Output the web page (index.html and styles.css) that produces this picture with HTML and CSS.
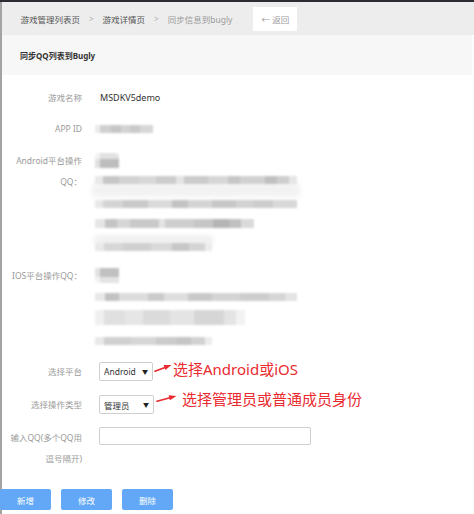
FILE: index.html
```html
<!DOCTYPE html>
<html lang="zh-CN">
<head>
<meta charset="utf-8">
<title>同步QQ列表到Bugly</title>
<link rel="stylesheet" href="styles.css">
</head>
<body>
<div class="topbar"></div>
<div class="page">
  <nav class="crumbs">
    <span class="crumb">游戏管理列表页</span>
    <span class="sep">&gt;</span>
    <span class="crumb">游戏详情页</span>
    <span class="sep">&gt;</span>
    <span class="crumb current">同步信息到bugly</span>
    <a class="back">← 返回</a>
  </nav>
  <div class="subhead"><h1 class="title">同步QQ列表到Bugly</h1></div>

  <div class="form">
    <div class="row">
      <div class="label">游戏名称</div>
      <div class="value text">MSDKV5demo</div>
    </div>
    <div class="row">
      <div class="label">APP ID</div>
      <div class="value"><div class="vline"><span class="blur b-appid"></span></div></div>
    </div>
    <div class="row">
      <div class="label">Android平台操作QQ：</div>
      <div class="value">
        <div class="vline"><span class="blur b-sq"></span></div>
        <div class="vline"><span class="blur b-a1"></span></div>
        <div class="vline"><span class="blur b-a2"></span></div>
        <div class="vline"><span class="blur b-a3"></span></div>
        <div class="vline"><span class="blur b-a4"></span></div>
      </div>
    </div>
    <div class="row">
      <div class="label">IOS平台操作QQ：</div>
      <div class="value">
        <div class="vline"><span class="blur b-sq b-sq2"></span></div>
        <div class="vline"><span class="blur b-i1"></span></div>
        <div class="vline"><span class="blur b-i2"></span></div>
        <div class="vline"><span class="blur b-i3"></span></div>
      </div>
    </div>
    <div class="row row-select">
      <div class="label">选择平台</div>
      <div class="value inline">
        <div class="select s1"><span>Android</span><span class="caret">▼</span></div>
        <svg class="arrow a1" width="18" height="21" viewBox="0 0 18 21">
          <line x1="1" y1="10.2" x2="11" y2="6.5" stroke="#ea2a2f" stroke-width="1.7" stroke-linecap="round"/>
          <polygon points="17.5,4 9.6,4 11.4,9" fill="#ea2a2f"/>
        </svg>
        <span class="note n1">选择Android或iOS</span>
      </div>
    </div>
    <div class="row row-select">
      <div class="label">选择操作类型</div>
      <div class="value inline">
        <div class="select s2"><span>管理员</span><span class="caret">▼</span></div>
        <svg class="arrow a2" width="22" height="21" viewBox="0 0 22 21">
          <line x1="1" y1="7.2" x2="14" y2="3.8" stroke="#ea2a2f" stroke-width="1.7" stroke-linecap="round"/>
          <polygon points="20.5,2 12.6,1.2 13.9,6.3" fill="#ea2a2f"/>
        </svg>
        <span class="note n2">选择管理员或普通成员身份</span>
      </div>
    </div>
    <div class="row row-input">
      <div class="label two">输入QQ(多个QQ用逗号隔开)</div>
      <div class="value"><div class="input"></div></div>
    </div>
  </div>

  <div class="actions">
    <button class="btn">新增</button>
    <button class="btn">修改</button>
    <button class="btn">删除</button>
  </div>
</div>
</body>
</html>
```

FILE: styles.css
```css
* { box-sizing: border-box; }

body {
  margin: 0;
  background: #fff;
  font-family: "Noto Sans", "Noto Sans CJK SC", sans-serif;
  color: #333;
}

.topbar {
  height: 2px;
  background: #2c2c33;
}

.page {
  border-left: 2px solid #a3a3a3;
  min-height: 512px;
}

/* breadcrumb */
.crumbs {
  height: 33px;
  background: #ededed;
  display: flex;
  align-items: center;
  padding-left: 18.5px;
  font-size: 8.5px;
  color: #555;
}
.sep {
  color: #b0b0b0;
  margin: 0 9px;
  font-size: 8px;
}
.current { color: #9a9a9a; }
.back {
  margin-left: 21px;
  width: 44px;
  height: 24px;
  background: #fff;
  color: #9a9a9a;
  display: flex;
  align-items: center;
  justify-content: center;
}

/* sub header */
.subhead {
  height: 40px;
  background: #f7f7f7;
  margin-right: 2px;
  display: flex;
  align-items: center;
  padding-left: 18px;
}
.title {
  margin: 0;
  font-size: 8px;
  font-weight: 700;
  color: #333;
}

/* form */
.form {
  padding-top: 11.5px;
  display: flex;
  flex-direction: column;
  gap: 10.5px;
}
.row {
  display: flex;
  align-items: flex-start;
}
.row-select { margin-top: 1.5px; }
.row-input { margin-top: 1px; }

.label {
  width: 80px;
  flex: none;
  text-align: right;
  font-size: 8.5px;
  line-height: 21px;
  color: #9a9a9a;
}
.label.two { line-height: 21.5px; }

.value {
  margin-left: 17px;
  flex: 1;
}
.value.text {
  font-size: 9px;
  line-height: 21px;
  color: #333;
  padding-left: 1px;
}
.value.inline {
  display: flex;
  align-items: center;
  height: 21px;
}

/* blurred (masked) values */
.vline {
  height: 21px;
  display: flex;
  align-items: center;
  margin-left: -4px;
}
.blur {
  display: block;
  height: 8px;
  filter: blur(0.8px);
}
.b-appid {
  width: 58px;
  background: linear-gradient(90deg, #ececec 0 9%, #d0d0d0 9% 28%, #c6c6c6 28% 44%, #d3d3d3 44% 60%, #cacaca 60% 78%, #d7d7d7 78% 100%);
}
.b-sq {
  width: 24px;
  height: 15px;
  border-radius: 4px 4px 0 0;
  background:
    linear-gradient(90deg, rgba(255,255,255,.55) 0 20%, transparent 20%),
    linear-gradient(180deg, #e2e2e2 0 40%, #bdbdbd 40% 100%);
}
.b-sq2 {
  border-radius: 0 0 0 4px;
  background:
    linear-gradient(90deg, rgba(255,255,255,.55) 0 20%, transparent 20%),
    linear-gradient(180deg, #c0c0c0 0 62%, #e4e4e4 62% 100%);
}
.b-a1 {
  width: 202px;
  margin-top: -3px;
  box-shadow: 0 10px 5px 3px #f2f2f2;
  background: linear-gradient(90deg, #e8e8e8 0 4%, #c6c6c6 4% 12%, #d2d2d2 12% 22%, #d8d8d8 22% 30%, #cccccc 30% 40%, #e4e4e4 40% 44%, #cbcbcb 44% 56%, #d6d6d6 56% 66%, #c6c6c6 66% 72%, #d1d1d1 72% 84%, #c0c0c0 84% 90%, #cecece 90% 96%, #e5e5e5 96% 100%);
}
.b-a2 {
  width: 202px;
  margin-top: 4px;
  background: linear-gradient(90deg, #e8e8e8 0 4%, #d4d4d4 4% 14%, #c9c9c9 14% 26%, #dadada 26% 38%, #c3c3c3 38% 46%, #d4d4d4 46% 58%, #c7c7c7 58% 70%, #d2d2d2 70% 78%, #cdcdcd 78% 88%, #d8d8d8 88% 100%);
}
.b-a3 {
  width: 159px;
  height: 9px;
  background: linear-gradient(90deg, #e6e6e6 0 6%, #c4c4c4 6% 14%, #d6d6d6 14% 22%, #c9c9c9 22% 40%, #e4e4e4 40% 44%, #cecece 44% 62%, #c6c6c6 62% 74%, #b5b5b5 74% 84%, #c0c0c0 84% 92%, #dadada 92% 100%);
}
.b-a4 {
  width: 117px;
  margin-top: 6px;
  box-shadow: 0 -7px 4px 1px #f1f1f1;
  background: linear-gradient(90deg, #e9e9e9 0 8%, #d7d7d7 8% 24%, #d0d0d0 24% 48%, #d9d9d9 48% 66%, #c7c7c7 66% 80%, #d4d4d4 80% 94%, #ececec 94% 100%);
}
.b-i1 {
  width: 202px;
  background: linear-gradient(90deg, #e8e8e8 0 5%, #c2c2c2 5% 12%, #dcdcdc 12% 26%, #cbcbcb 26% 34%, #dedede 34% 46%, #c9c9c9 46% 58%, #d4d4d4 58% 72%, #cdcdcd 72% 86%, #d6d6d6 86% 94%, #e3e3e3 94% 100%);
}
.b-i2 {
  width: 150px;
  height: 15px;
  background: linear-gradient(90deg, #f0f0f0 0 6%, #e0e0e0 6% 20%, #e6e6e6 20% 32%, #dbdbdb 32% 50%, #e4e4e4 50% 66%, #d6d6d6 66% 86%, #e4e4e4 86% 94%, #f2f2f2 94% 100%);
}
.b-i3 {
  width: 117px;
  margin-top: 4px;
  background: linear-gradient(90deg, #e9e9e9 0 8%, #d0d0d0 8% 30%, #d6d6d6 30% 52%, #cbcbcb 52% 70%, #c5c5c5 70% 82%, #d2d2d2 82% 94%, #ececec 94% 100%);
}

/* selects */
.select {
  height: 19.5px;
  border: 1px solid #cfcfcf;
  border-radius: 2px;
  background: #fff;
  display: flex;
  align-items: center;
  justify-content: space-between;
  padding: 0 4px 0 4px;
  font-size: 8.5px;
  color: #333;
  flex: none;
}
.s1 { width: 54px; }
.s2 { width: 55px; }
.caret {
  font-size: 6px;
  color: #222;
}

/* annotations */
.arrow { flex: none; align-self: stretch; height: 21px; }
.a1 { margin-left: 1px; }
.a2 { margin-left: 2px; }
.note {
  color: #ea2a2f;
  font-size: 15px;
  line-height: 18px;
  white-space: nowrap;
}
.n1 { margin-left: 1px; margin-bottom: 5px; }
.n2 { margin-left: 4px; margin-bottom: 11px; }

/* text input */
.input {
  width: 212px;
  height: 18.5px;
  border: 1px solid #cfcfcf;
  border-radius: 2px;
  background: #fff;
}

/* buttons */
.actions {
  display: flex;
  gap: 10px;
  margin-top: 19.5px;
  margin-left: -2px;
}
.btn {
  width: 51px;
  height: 21px;
  border: 0;
  border-radius: 2px;
  background: #62a8f6;
  color: #fff;
  font-family: "Noto Sans", "Noto Sans CJK SC", sans-serif;
  font-size: 8.5px;
  padding: 0;
}
```
